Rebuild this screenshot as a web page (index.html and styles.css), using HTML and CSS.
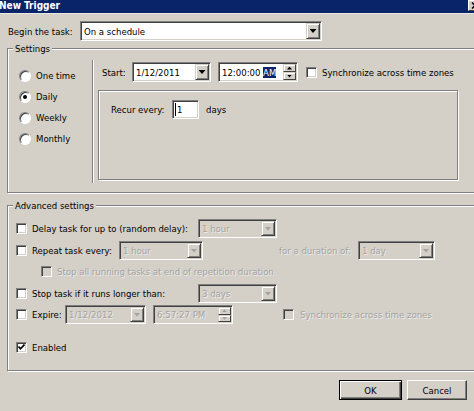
FILE: index.html
```html
<!DOCTYPE html>
<html>
<head>
<meta charset="utf-8">
<title>New Trigger</title>
<link rel="stylesheet" href="styles.css">
</head>
<body>
<div class="dialog">
  <div class="titlebar">
    <span class="title">New Trigger</span>
    <span class="close"><svg width="8" height="7" viewBox="0 0 8 7"><path d="M1 0.5 L7 6.5 M7 0.5 L1 6.5" stroke="#000" stroke-width="1.5" fill="none"/></svg></span>
  </div>
  <div class="client">
    <div class="begin-row">
      <span class="begin-label">Begin the task:</span>
      <div class="field begin-combo"><span class="val">On a schedule</span><span class="drop"><i class="tri"></i></span></div>
    </div>

    <div class="group settings">
      <span class="legend">Settings</span>
      <div class="settings-body">
        <div class="radios">
          <div class="radio-row"><span class="radio"></span><span class="rlabel">One time</span></div>
          <div class="radio-row"><span class="radio on"></span><span class="rlabel">Daily</span></div>
          <div class="radio-row"><span class="radio"></span><span class="rlabel">Weekly</span></div>
          <div class="radio-row"><span class="radio"></span><span class="rlabel">Monthly</span></div>
        </div>
        <div class="vsep"></div>
        <div class="sched">
          <div class="start-row">
            <span class="start-label">Start:</span>
            <div class="field date-combo"><span class="val">1/12/2011</span><span class="drop"><i class="tri"></i></span></div>
            <div class="field time-spin"><span class="val">12:00:00 <span class="sel">AM</span></span><span class="spin"><span class="sb"><i class="up"></i></span><span class="sb"><i class="down"></i></span></span></div>
            <span class="check sync-check"></span>
            <span class="sync-label">Synchronize across time zones</span>
          </div>
          <div class="recur-box">
            <span class="recur-label">Recur every:</span>
            <div class="field recur-input"><span class="caret"></span><span class="val">1</span></div>
            <span class="days">days</span>
          </div>
        </div>
      </div>
    </div>

    <div class="group advanced">
      <span class="legend">Advanced settings</span>
      <div class="adv-body">
        <div class="arow r1">
          <span class="check"></span>
          <span class="lbl w-long">Delay task for up to (random delay):</span>
          <div class="field dis combo-a"><span class="val">1 hour</span><span class="drop"><i class="tri"></i></span></div>
        </div>
        <div class="arow r2">
          <span class="check"></span>
          <span class="lbl w-repeat">Repeat task every:</span>
          <div class="field dis combo-b"><span class="val">1 hour</span><span class="drop"><i class="tri"></i></span></div>
          <span class="dur-label disabled">for a duration of:</span>
          <div class="field dis combo-c"><span class="val">1 day</span><span class="drop"><i class="tri"></i></span></div>
        </div>
        <div class="arow r3">
          <span class="check dis-check sub-check"></span>
          <span class="lbl disabled">Stop all running tasks at end of repetition duration</span>
        </div>
        <div class="arow r4">
          <span class="check"></span>
          <span class="lbl w-long">Stop task if it runs longer than:</span>
          <div class="field dis combo-a"><span class="val">3 days</span><span class="drop"><i class="tri"></i></span></div>
        </div>
        <div class="arow r5">
          <span class="check"></span>
          <span class="lbl w-expire">Expire:</span>
          <div class="field dis exp-date"><span class="val">1/12/2012</span><span class="drop"><i class="tri"></i></span></div>
          <div class="field dis exp-time"><span class="val">6:57:27 PM</span><span class="spin"><span class="sb"><i class="up"></i></span><span class="sb"><i class="down"></i></span></span></div>
          <span class="check dis-check exp-sync"></span>
          <span class="lbl disabled">Synchronize across time zones</span>
        </div>
        <div class="arow r6">
          <span class="check checked"><svg width="7" height="7" viewBox="0 0 7 7"><path d="M0.5 2.5 L2.5 4.8 L6.5 0.5" stroke="#000" stroke-width="1.7" fill="none"/></svg></span>
          <span class="lbl">Enabled</span>
        </div>
      </div>
    </div>

    <div class="buttons">
      <button class="btn default">OK</button>
      <button class="btn cancel">Cancel</button>
    </div>
  </div>
</div>
</body>
</html>
```

FILE: styles.css
```css
* { box-sizing: border-box; }
html, body { margin: 0; padding: 0; }
body {
  width: 474px;
  height: 411px;
  overflow: hidden;
  background: #d4d0c8;
  font-family: "DejaVu Sans", "Liberation Sans", sans-serif;
  font-stretch: condensed;
  font-size: 9.5px;
  color: #000;
}
.dialog { width: 486px; }

.titlebar {
  height: 13px;
  background: #0a246a;
  display: flex;
  justify-content: space-between;
  align-items: flex-start;
}
.title {
  color: #fff;
  font-weight: bold;
  font-size: 10px;
  line-height: 12px;
  margin-left: -1px;
}
.close {
  width: 14px;
  height: 11px;
  margin-right: 4px;
  background: #d4d0c8;
  border: 1px solid;
  border-color: #fff #404040 #404040 #fff;
  display: flex;
  align-items: center;
  justify-content: center;
}

.client { padding-left: 7px; border-top: 1px solid #e9e7e2; }

/* 3D fields */
.field {
  height: 20px;
  background: #fff;
  border: 1px solid;
  border-color: #808080 #fff #fff #808080;
  box-shadow: inset 1px 1px #404040, inset -1px -1px #d4d0c8;
  padding: 1px;
  display: flex;
  align-items: center;
  flex: none;
}
.field .val { flex: 1; padding-left: 2px; white-space: nowrap; overflow: hidden; }
.drop {
  width: 14px;
  height: 16px;
  background: #d4d0c8;
  border: 1px solid;
  border-color: #d4d0c8 #404040 #404040 #d4d0c8;
  box-shadow: inset 1px 1px #fff, inset -1px -1px #808080;
  display: flex;
  align-items: center;
  justify-content: center;
  flex: none;
}
.tri {
  display: block;
  width: 7px;
  height: 4px;
  background: #000;
  clip-path: polygon(0 0, 100% 0, 50% 100%);
}
.spin { display: flex; flex-direction: column; width: 13px; height: 16px; flex: none; }
.sb {
  height: 8px;
  background: #d4d0c8;
  border: 1px solid;
  border-color: #d4d0c8 #404040 #404040 #d4d0c8;
  box-shadow: inset 1px 1px #fff;
  display: flex;
  align-items: center;
  justify-content: center;
}
.sb i { display: block; width: 5px; height: 3px; background: #000; }
.sb .up { clip-path: polygon(50% 0, 100% 100%, 0 100%); }
.sb .down { clip-path: polygon(0 0, 100% 0, 50% 100%); }

.field.dis { background: #d4d0c8; color: #a3a3a3; text-shadow: 1px 1px rgba(255,255,255,0.6); }
.field.dis .tri, .field.dis .sb i { background: #a3a3a3; }
.disabled { color: #a3a3a3; text-shadow: 1px 1px rgba(255,255,255,0.6); }

.check {
  width: 11px;
  height: 11px;
  background: #fff;
  border: 1px solid;
  border-color: #808080 #fff #fff #808080;
  box-shadow: inset 1px 1px #404040, inset -1px -1px #d4d0c8;
  flex: none;
  display: flex;
  align-items: center;
  justify-content: center;
}
.check.dis-check { background: #d4d0c8; }

/* begin row */
.begin-row { display: flex; align-items: center; margin-top: 7px; height: 20px; }
.begin-label { width: 73px; padding-left: 1px; }
.begin-combo { width: 242px; }

/* group boxes */
.group {
  border: 1px solid #808080;
  box-shadow: inset 1px 1px #fff, 1px 1px #fff;
  margin-right: 7px;
}
.legend {
  display: block;
  width: max-content;
  height: 13px;
  line-height: 13px;
  margin: -7px 0 0 5px;
  padding: 0 2px;
  background: #d4d0c8;
}
.settings { margin-top: 7px; height: 145px; }
.settings-body { display: flex; align-items: flex-start; }
.radios { width: 84px; padding: 10px 0 0 11px; }
.radio-row { display: flex; align-items: center; height: 21px; }
.radio {
  width: 12px;
  height: 12px;
  border-radius: 50%;
  background: #fff;
  border: 1px solid;
  border-color: #808080 #fff #fff #808080;
  box-shadow: inset 1px 1px #404040;
  display: flex;
  align-items: center;
  justify-content: center;
  flex: none;
}
.radio.on::after { content: ""; width: 4px; height: 4px; border-radius: 50%; background: #000; }
.rlabel { margin-left: 5px; }
.vsep {
  width: 2px;
  height: 123px;
  margin-top: 5px;
  border-left: 1px solid #808080;
  border-right: 1px solid #fff;
}
.sched { margin-left: 4px; }
.start-row { display: flex; align-items: center; height: 20px; margin-top: 7px; padding-left: 4px; }
.start-label { width: 30px; }
.date-combo { width: 79px; }
.time-spin { width: 80px; margin-left: 7px; }
.sel { background: #0a246a; color: #fff; }
.sync-check { margin-left: 8px; }
.sync-label { margin-left: 5px; white-space: nowrap; }
.recur-box {
  width: 360px;
  height: 90px;
  margin-top: 8px;
  border: 1px solid #808080;
  box-shadow: inset 1px 1px #fff, 1px 1px #fff;
  display: flex;
  padding: 9px 0 0 12px;
  align-items: flex-start;
}
.recur-label { width: 61px; line-height: 19px; }
.recur-input { width: 27px; height: 19px; }
.recur-input .val { padding-left: 1px; }
.caret { width: 1px; height: 13px; background: #000; margin-left: 1px; }
.days { margin-left: 7px; line-height: 19px; }

.advanced { margin-top: 12px; height: 166px; }
.adv-body { padding: 6px 0 0 8px; }
.arow { display: flex; align-items: center; height: 21px; white-space: nowrap; }
.r2, .r4 { margin-top: 1px; }
.r6 { margin-top: 12px; }
.arow .lbl { margin-left: 5px; }
.w-long { width: 166px; flex: none; }
.w-repeat { width: 87px; flex: none; }
.w-expire { width: 33px; flex: none; }
.combo-a { width: 79px; height: 19px; }
.combo-b { width: 84px; height: 19px; }
.combo-c { width: 77px; height: 19px; }
.dur-label { margin-left: 76px; width: 79px; }
.sub-check { margin-left: 25px; }
.exp-date { width: 81px; height: 19px; }
.exp-time { width: 80px; height: 19px; margin-left: 7px; }
.combo-a .drop, .combo-b .drop, .combo-c .drop, .exp-date .drop { height: 15px; }
.exp-time .spin { height: 15px; }
.exp-time .sb { height: 7.5px; }
.exp-sync { margin-left: 50px; }
.arow .exp-sync + .lbl { margin-left: 6px; }

.buttons {
  display: flex;
  justify-content: flex-end;
  gap: 5px;
  margin-top: 9px;
  padding-right: 19px;
}
.btn {
  height: 20px;
  font: inherit;
  color: #000;
  background: #d4d0c8;
  border: 1px solid;
  border-color: #fff #404040 #404040 #fff;
  box-shadow: inset -1px -1px #808080;
  padding: 0;
}
.btn.default {
  width: 63px;
  border-color: #000;
  box-shadow: inset 1px 1px #fff, inset -1px -1px #404040, inset -2px -2px #808080;
}
.btn.cancel { width: 60px; }
```
